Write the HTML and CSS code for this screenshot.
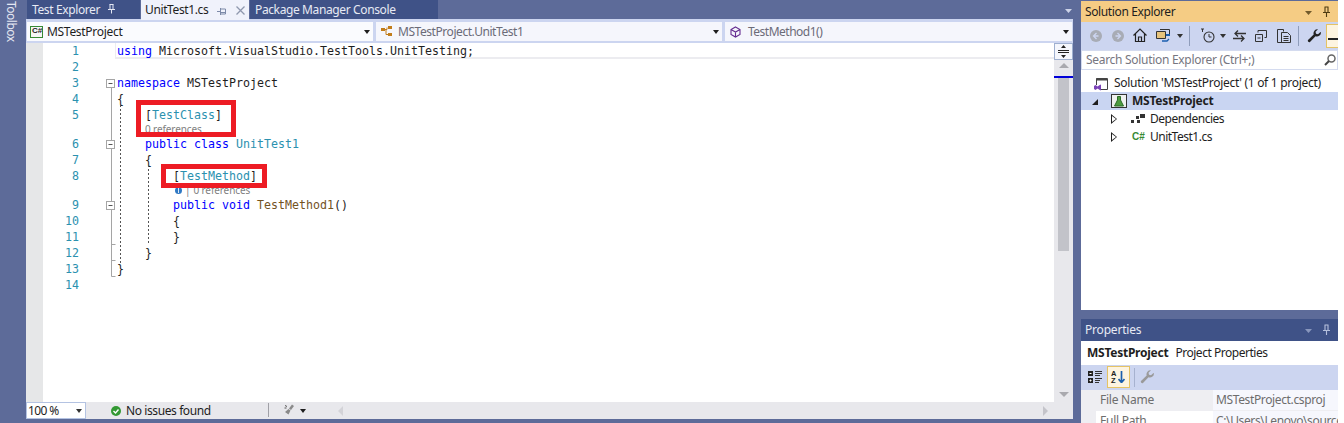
FILE: index.html
```html
<!DOCTYPE html>
<html lang="en">
<head>
<meta charset="utf-8">
<title>Visual Studio - UnitTest1.cs</title>
<link rel="stylesheet" href="styles.css">
</head>
<body>
<div class="ide">
  <aside class="rail"><span class="rail-label">Toolbox</span></aside>

  <main class="doc">
    <div class="tabs">
      <div class="tab tab-a">Test Explorer
        <svg class="tab-pin" width="9" height="11" viewBox="0 0 9 11"><path d="M2.500 1.500h4M3 1.500v4.500M6 1.500v4.500M1 6.500h7M4.500 6.500v4" fill="none" stroke="#e4e8f4"/></svg>
      </div>
      <div class="tab tab-b">UnitTest1.cs
        <svg class="tab-pin2" width="11" height="9" viewBox="0 0 11 9"><path d="M0 4.500h3.500M3.500 1v7M3.500 2h5v5h-5M3.500 5.500h5" fill="none" stroke="#7d8aa8"/></svg>
        <svg class="tab-x" width="9" height="9" viewBox="0 0 9 9"><path d="M.5.5l8 8M8.500.5l-8 8" stroke="#8f98ae" stroke-width="1.300"/></svg>
      </div>
      <div class="tab tab-c">Package Manager Console</div>
      <svg class="tab-menu" width="7" height="4" viewBox="0 0 7 4"><path d="M0 0h7L3.500 4z" fill="#ced4e8"/></svg>
    </div>

    <div class="nav">
      <div class="drop drop-1">
        <svg class="cs-badge" width="13" height="12" viewBox="0 0 13 12"><rect x=".5" y=".5" width="12" height="11" fill="#f6f6f6" stroke="#388a34"/></svg>
        <span class="cs-text">C#</span>
        <span class="drop-text">MSTestProject</span>
        <i class="caret"></i>
      </div>
      <div class="drop">
        <svg class="drop-ico" width="14" height="13" viewBox="0 0 14 13"><path d="M1 3h4v3H1zM8 1h4v3H8zM8 8h4v3H8z" fill="#c27d1a"/><path d="M4 4.500h3V2.500M6 4.500V9.500h2" fill="none" stroke="#c27d1a"/></svg>
        <span class="drop-text muted">MSTestProject.UnitTest1</span>
        <i class="caret"></i>
      </div>
      <div class="drop drop-3">
        <svg class="drop-ico" width="11" height="12" viewBox="0 0 11 12"><path d="M5.500 1L10 3.500v5L5.500 11 1 8.500v-5zM1 3.500l4.500 2.500 4.500-2.500M5.500 6v5" fill="none" stroke="#652d90" stroke-width="1.100"/></svg>
        <span class="drop-text muted method-name">TestMethod1()</span>
        <i class="caret"></i>
      </div>
    </div>

    <div class="editor">
      <div class="gutter"></div>
      <div class="code">
        <div class="ln current"><b>1</b><pre><s>using</s> Microsoft.VisualStudio.TestTools.UnitTesting;</pre></div>
        <div class="ln"><b>2</b><pre></pre></div>
        <div class="ln"><b>3</b><pre><s>namespace</s> MSTestProject</pre></div>
        <div class="ln"><b>4</b><pre>{</pre></div>
        <div class="ln"><b>5</b><pre>    [<u>TestClass</u>]</pre></div>
        <div class="lens lens-1">0 references</div>
        <div class="ln"><b>6</b><pre>    <s>public</s> <s>class</s> <u>UnitTest1</u></pre></div>
        <div class="ln"><b>7</b><pre>    {</pre></div>
        <div class="ln"><b>8</b><pre>        [<u>TestMethod</u>]</pre></div>
        <div class="lens lens-2"><svg class="info" width="7" height="7" viewBox="0 0 7 7"><circle cx="3.500" cy="3.500" r="3.500" fill="#2f79c4"/><rect x="3" y="1" width="1" height="5" fill="#dbe8f6"/></svg><span class="bar">|</span>0 references</div>
        <div class="ln"><b>9</b><pre>        <s>public</s> <s>void</s> <em>TestMethod1</em>()</pre></div>
        <div class="ln"><b>10</b><pre>        {</pre></div>
        <div class="ln"><b>11</b><pre>        }</pre></div>
        <div class="ln"><b>12</b><pre>    }</pre></div>
        <div class="ln"><b>13</b><pre>}</pre></div>
        <div class="ln"><b>14</b><pre></pre></div>
      </div>

      <svg class="folds" width="180" height="359" viewBox="0 0 180 359">
        <g fill="none" stroke="#a5a5a5">
          <path d="M68.500 45v188.500h4M68.500 201.500h4M68.500 217.500h4"/>
          <rect x="63.500" y="36.500" width="8" height="8" fill="#fff"/>
          <rect x="63.500" y="97.500" width="8" height="8" fill="#fff"/>
          <rect x="63.500" y="158.500" width="8" height="8" fill="#fff"/>
        </g>
        <path d="M65.500 40.500h4M65.500 101.500h4M65.500 162.500h4" stroke="#555"/>
        <path d="M77.500 62v160M105.500 122v78" stroke="#555" stroke-dasharray="2 2" fill="none"/>
      </svg>

      <div class="mark mark-1"></div>
      <div class="mark mark-2"></div>

      <div class="vscroll">
        <div class="split"><svg width="11" height="13" viewBox="0 0 11 13"><path d="M0 5.500h11M0 7.500h11" stroke="#222"/><path d="M5.500 0L3 3h5zM5.500 13L3 10h5z" fill="#222"/></svg></div>
        <i class="sc-up"></i>
        <div class="sc-line"></div>
        <div class="thumb"></div>
        <i class="sc-down"></i>
      </div>
    </div>

    <div class="status">
      <div class="zoom-box">100 %<i class="caret"></i></div>
      <svg class="ok" width="10" height="10" viewBox="0 0 10 10"><circle cx="5" cy="5" r="5" fill="#339933"/><path d="M2.500 5l2 2 3-3.500" fill="none" stroke="#fff" stroke-width="1.400"/></svg>
      <span class="issues">No issues found</span>
      <i class="st-sep"></i>
      <svg class="broom" width="11" height="11" viewBox="0 0 11 11"><path d="M8 .5L10 2 7 6 5 4.500zM4.500 5L6.500 6.500 4.500 10.500 1 8z" fill="#8a8a8a"/><path d="M1 1.500l2 1M.5 4l2 0" stroke="#555"/></svg>
      <i class="caret caret-dark"></i>
      <i class="hs-left"></i>
      <i class="hs-right"></i>
    </div>
  </main>

  <section class="side">
    <div class="se">
      <header class="title title-on">
        <span>Solution Explorer</span>
        <svg class="title-arrow" width="7" height="4" viewBox="0 0 7 4"><path d="M0 0h7L3.500 4z" fill="#715a2b"/></svg>
        <svg class="title-pin" width="9" height="11" viewBox="0 0 9 11"><path d="M2.500 1h4M3 1v5M6 1v5M1 6.500h7M4.500 6.500v4.500" fill="none" stroke="#4e3a10" stroke-width="1.100"/></svg>
      </header>
      <div class="se-tools">
        <svg class="tool t-back" width="12" height="12" viewBox="0 0 12 12"><circle cx="6" cy="6" r="6" fill="#a8acb5"/><path d="M6.500 3L3.500 6l3 3M3.500 6h5" fill="none" stroke="#ccd5f0" stroke-width="1.300"/></svg>
        <svg class="tool t-fwd" width="12" height="12" viewBox="0 0 12 12"><circle cx="6" cy="6" r="6" fill="#a8acb5"/><path d="M5.500 3l3 3-3 3M8.500 6h-5" fill="none" stroke="#ccd5f0" stroke-width="1.300"/></svg>
        <svg class="tool t-home" width="14" height="14" viewBox="0 0 14 14"><path d="M.5 7.500L7 1l6.500 6.500M2.500 6v7.500h9V6M5.500 13.500V9h3v4.500" fill="none" stroke="#222" stroke-width="1.200"/></svg>
        <svg class="tool t-sync" width="15" height="14" viewBox="0 0 15 14"><path d="M.5 3.500h9v7h-9z" fill="#e6c37c" stroke="#333"/><path d="M4 1.500h9.500v6" fill="none" stroke="#333"/><path d="M6 13h5l2-2" fill="none" stroke="#1b5fae" stroke-width="1.300"/><path d="M10 6h4v2h-4z" fill="#1b5fae"/></svg>
        <i class="tcaret t-c1"></i>
        <i class="tsep t-s1"></i>
        <svg class="tool t-clock" width="14" height="15" viewBox="0 0 14 15"><circle cx="8" cy="9" r="5" fill="none" stroke="#333" stroke-width="1.100"/><path d="M8 6v3h2.500M0 1h3M1.500 1v3" fill="none" stroke="#333"/></svg>
        <i class="tcaret t-c2"></i>
        <svg class="tool t-swap" width="13" height="12" viewBox="0 0 13 12"><path d="M13 3.500H2M5 .5l-3 3 3 3M0 8.500h11M8 5.500l3 3-3 3" fill="none" stroke="#333" stroke-width="1.300"/></svg>
        <svg class="tool t-coll" width="12" height="12" viewBox="0 0 12 12"><path d="M.5 4.500h7v7h-7zM3 2.500V.5h8.500v7H9.500M2.500 8h3" fill="none" stroke="#333"/></svg>
        <svg class="tool t-copy" width="14" height="14" viewBox="0 0 14 14"><path d="M8.500 13.500h-8V.5h6v2M4.500 3.500h6l3 3v7h-9z" fill="#ccd5f0" stroke="#333"/><path d="M6.500 7.500h5M6.500 9.500h5M6.500 11.500h5" stroke="#333"/></svg>
        <i class="tsep t-s2"></i>
        <svg class="tool t-wrench" width="14" height="14" viewBox="0 0 14 14"><path d="M14 3.500a4 4 0 0 1-5.500 3.700L3 13a1.500 1.500 0 0 1-2-2l5.700-5.500A4 4 0 0 1 11 .3L8.500 2.800l.5 2 2 .5L13.500 3z" fill="#222"/></svg>
        <div class="t-pin"><i></i></div>
      </div>
      <div class="se-search">
        <span>Search Solution Explorer (Ctrl+;)</span>
        <svg width="12" height="12" viewBox="0 0 12 12"><circle cx="7.500" cy="4.500" r="3.500" fill="none" stroke="#666" stroke-width="1.500"/><path d="M5 7l-4 4" stroke="#444" stroke-width="2"/></svg>
      </div>
      <div class="tree">
        <div class="node n-sol">
          <svg class="n-ico" width="14" height="14" viewBox="0 0 14 14"><path d="M2.500 8V1.500h11v11H7" fill="none" stroke="#444"/><path d="M2 1.500h11V3.500H2z" fill="#444"/><path d="M0 9l1.500-1 2 1.500L6.500 7.500 7 8v5l-.5.500-3-2-2 1.500L0 12z" fill="#7b43b8"/></svg>
          <span>Solution 'MSTestProject' (1 of 1 project)</span>
        </div>
        <div class="node n-proj">
          <i class="open"></i>
          <svg class="n-ico" width="16" height="14" viewBox="0 0 16 14"><rect x=".5" y=".5" width="15" height="13" fill="#eef0ee" stroke="#333"/><path d="M6.500 2.500h3v3.500l3 6H3.500l3-6z" fill="#4d9b3f" stroke="#2a6b26"/></svg>
          <strong>MSTestProject</strong>
        </div>
        <div class="node n-dep">
          <i class="closed"></i>
          <svg class="n-ico" width="14" height="10" viewBox="0 0 14 10"><path d="M9 0h5v4H9zM5 2h3v3H5zM0 6h3v3H0zM6 6h3v3H6z" fill="#333"/></svg>
          <span>Dependencies</span>
        </div>
        <div class="node n-dep">
          <i class="closed"></i>
          <span class="cs-green">C#</span>
          <span>UnitTest1.cs</span>
        </div>
      </div>
    </div>

    <div class="props">
      <header class="title title-off">
        <span>Properties</span>
        <svg class="title-arrow" width="7" height="4" viewBox="0 0 7 4"><path d="M0 0h7L3.500 4z" fill="#8997bd"/></svg>
        <svg class="title-pin" width="9" height="11" viewBox="0 0 9 11"><path d="M2.500 1h4M3 1v5M6 1v5M1 6.500h7M4.500 6.500v4.500" fill="none" stroke="#b6c0dc" stroke-width="1.100"/></svg>
      </header>
      <div class="p-head"><strong>MSTestProject</strong><span>Project Properties</span></div>
      <div class="p-tools">
        <svg class="p-cat" width="14" height="14" viewBox="0 0 14 14"><path d="M0 1h5v5H0zM0 8h5v5H0z" fill="#222"/><path d="M1.500 3.500h2M1.500 10.500h2M2.500 9.500v2" stroke="#fff"/><path d="M7 1.500h7M7 3.500h7M7 5.500h5M7 8.500h7M7 10.500h5M7 12.500h4" stroke="#333"/></svg>
        <div class="p-az"><span class="az">A<br>Z</span><svg width="7" height="12" viewBox="0 0 7 12"><path d="M3.500 0v11M.5 8l3 3.500L6.500 8" fill="none" stroke="#1b5fae" stroke-width="1.700"/></svg></div>
        <i class="p-sep"></i>
        <svg class="p-wrench" width="14" height="14" viewBox="0 0 14 14"><path d="M14 3.500a4 4 0 0 1-5.500 3.700L3 13a1.500 1.500 0 0 1-2-2l5.700-5.500A4 4 0 0 1 11 .3L8.500 2.800l.5 2 2 .5L13.500 3z" fill="#9a9a9a"/></svg>
      </div>
      <div class="p-grid">
        <div class="p-row p-first"><span class="p-key">File Name</span><span class="p-val">MSTestProject.csproj</span></div>
        <div class="p-row"><span class="p-key">Full Path</span><span class="p-val">C:\Users\Lenovo\source\repos\MSTestProject</span></div>
      </div>
    </div>
  </section>
</div>
</body>
</html>
```

FILE: styles.css
```css
* { box-sizing: border-box; }
html, body { margin: 0; padding: 0; background: #fff; }
body { width: 1344px; height: 423px; overflow: hidden; font: 12px/16px "Noto Sans", sans-serif; letter-spacing: -.38px; color: #1e1e1e; }
i { display: block; }

.ide { display: flex; width: 1338px; height: 423px; background: #5d6b99; overflow: hidden; }

.rail { width: 26px; flex: none; padding-top: 1px; padding-left: 3px; }
.rail-label { display: block; writing-mode: vertical-rl; color: #e4e7f2; line-height: 16px; letter-spacing: -.5px; }

.doc { width: 1047px; flex: none; display: flex; flex-direction: column; height: 419px; margin-right: 8px; }

.tabs { position: relative; height: 19px; flex: none; display: flex; gap: 1px; padding-left: 1px; }
.tab { position: relative; height: 19px; line-height: 19px; padding-left: 5px; color: #e7eaf4; background: #3f5287; }
.tab-a { width: 113px; }
.tab-b { width: 108px; padding-left: 4px; height: 20px; color: #1e1e1e; background: #f0f2fb; }
.tab-c { width: 188px; }
.tab-pin { position: absolute; left: 80px; top: 3px; }
.tab-pin2 { position: absolute; left: 76px; top: 7px; }
.tab-x { position: absolute; left: 95px; top: 6px; }
.tab-menu { position: absolute; left: 1039px; top: 9px; }

.nav { height: 24px; flex: none; display: flex; gap: 3px; background: #ccd5f0; padding: 3px 1px 2px 1px; }
.drop { position: relative; flex: 1; display: flex; align-items: center; background: #f5f6fc; height: 19px; padding-left: 3px; }
.drop-1 { background: #fafbfe; letter-spacing: -.3px; }
.drop-3 { padding-left: 4px; }
.drop-text { margin-left: 4px; }
.muted { color: #6b6b78; letter-spacing: -.44px; }
.method-name { margin-left: 7px; letter-spacing: -.5px; }
.cs-badge { flex: none; }
.cs-text { position: absolute; left: 5px; top: 1px; font: bold 8px/16px "Liberation Sans", sans-serif; letter-spacing: 0; color: #222; }
.drop-ico { flex: none; margin-left: 1px; }
.caret { position: absolute; right: 3px; top: 8px; width: 0; height: 0; border: 3.500px solid transparent; border-top: 4px solid #1e1e1e; border-bottom: 0; }

.editor { position: relative; flex: 1; display: flex; background: #fff; min-height: 0; }
.gutter { width: 17px; flex: none; background: #e6e7e8; }
.code { flex: 1; font: 11.63px/16px "DejaVu Sans Mono", monospace; letter-spacing: 0; padding-right: 19px; }
.ln { display: flex; height: 16px; }
.ln b { width: 36px; flex: none; text-align: right; font-weight: 400; color: #2b91af; }
.ln pre { margin: 0 0 0 38px; font: inherit; white-space: pre; }
.current pre { flex: 1; margin-left: 36px; padding-left: 1px; height: 16px; border-bottom: 2px solid #ececf0; border-left: 1px solid #ececf0; line-height: 16px; }
s { text-decoration: none; color: #0000ff; }
u { text-decoration: none; color: #2b91af; }
em { font-style: normal; color: #74531f; }
.lens { height: 13px; font: 10px/13px "Noto Sans", sans-serif; letter-spacing: -.1px; color: #7f7f7f; display: flex; align-items: center; }
.lens-1 { padding-left: 102px; }
.lens-2 { padding-left: 132px; }
.info { margin-right: 3px; }
.bar { white-space: pre; margin-right: 3px; }

.folds { position: absolute; left: 17px; top: 0; pointer-events: none; }
.mark { position: absolute; border: 5px solid #ed1c24; }
.mark-1 { left: 110px; top: 57px; width: 100px; height: 37px; }
.mark-2 { left: 135px; top: 121px; width: 106px; height: 24px; }

.vscroll { position: absolute; right: 0; top: 0; bottom: 0; width: 19px; background: #e8e8ec; }
.split { height: 17px; background: #f4f6fc; border: 1px solid #9fb0d0; display: flex; align-items: center; justify-content: center; }
.sc-up { position: absolute; left: 5px; top: 20px; width: 0; height: 0; border: 5px solid transparent; border-top: 0; border-bottom: 5px solid #a9a9ae; }
.sc-line { position: absolute; left: 0; right: 0; top: 33px; height: 2px; background: #0000d8; }
.thumb { position: absolute; left: 4px; width: 11px; top: 35px; height: 173px; background: #c2c3c9; }
.sc-down { position: absolute; left: 5px; bottom: 5px; width: 0; height: 0; border: 5px solid transparent; border-bottom: 0; border-top: 5px solid #a9a9ae; }

.status { position: relative; height: 17px; flex: none; background: #e8e8ec; }
.zoom-box { position: absolute; left: 0; top: 0; width: 60px; height: 17px; background: #fff; border: 1px solid #b4c3e2; padding-left: 1px; line-height: 15px; letter-spacing: -.6px; }
.zoom-box .caret { top: 6px; border-top-color: #333; }
.ok { position: absolute; left: 85px; top: 4px; }
.issues { position: absolute; left: 100px; top: 0; line-height: 17px; letter-spacing: -.4px; }
.st-sep { position: absolute; left: 242px; top: 1px; width: 1px; height: 14px; background: #a0a0a6; }
.broom { position: absolute; left: 258px; top: 2px; }
.caret-dark { left: 274px; right: auto; top: 7px; }
.hs-left { position: absolute; left: 312px; top: 4px; width: 0; height: 0; border: 5px solid transparent; border-left: 0; border-right: 5px solid #d3d3d8; }
.hs-right { position: absolute; left: 1017px; top: 4px; width: 0; height: 0; border: 5px solid transparent; border-right: 0; border-left: 5px solid #c4c4ca; }

.side { width: 257px; flex: none; display: flex; flex-direction: column; gap: 9px; }
.se { height: 310px; flex: none; display: flex; flex-direction: column; background: #fff; }
.title { position: relative; flex: none; height: 22px; line-height: 21px; padding-left: 4px; }
.title-on { background: #f5cc84; color: #1e1e1e; border-top: 1px solid #5d6b99; }
.title-off { background: #3f5287; color: #e7eaf4; letter-spacing: -.2px; }
.title-arrow { position: absolute; left: 224px; top: 10px; }
.title-pin { position: absolute; left: 241px; top: 5px; }

.se-tools { position: relative; height: 28px; flex: none; background: #ccd5f0; }
.tool { position: absolute; }
.t-back { left: 9px; top: 8px; }
.t-fwd { left: 31px; top: 8px; }
.t-home { left: 52px; top: 6px; }
.t-sync { left: 75px; top: 6px; }
.tcaret { position: absolute; top: 12px; width: 0; height: 0; border: 3px solid transparent; border-top: 4px solid #333; border-bottom: 0; }
.t-c1 { left: 96px; }
.t-c2 { left: 139px; }
.tsep { position: absolute; top: 4px; width: 1px; height: 20px; background: #8f9dbb; }
.t-s1 { left: 108px; }
.t-s2 { left: 217px; }
.t-clock { left: 120px; top: 6px; }
.t-swap { left: 152px; top: 8px; }
.t-coll { left: 174px; top: 8px; }
.t-copy { left: 196px; top: 7px; }
.t-wrench { left: 226px; top: 7px; }
.t-pin { position: absolute; left: 245px; top: 2px; width: 12px; height: 24px; background: #fdf4e0; border: 1px solid #e5c365; border-right: 0; }
.t-pin i { position: absolute; left: 1px; top: 13px; width: 10px; height: 2px; background: #222; }

.se-search { height: 20px; flex: none; background: #fff; border: 1px solid #d4dbef; display: flex; align-items: center; justify-content: space-between; padding: 0 1px 0 4px; color: #767680; letter-spacing: -.3px; }
.tree { flex: 1; padding-top: 4px; }
.node { display: flex; align-items: center; height: 18px; position: relative; }
.n-sol { padding-left: 13px; letter-spacing: -.29px; }
.n-sol .n-ico { margin-right: 6px; margin-top: 1px; }
.n-proj { background: #c9d5f2; padding-left: 37px; }
.n-proj .n-ico { margin-left: 24px; position: absolute; left: 6px; top: 2px; }
.n-proj strong { font-weight: 700; margin-left: 14px; letter-spacing: -.25px; }
.open { position: absolute; left: 11px; top: 7px; width: 0; height: 0; border-bottom: 6px solid #1e1e1e; border-left: 6px solid transparent; }
.closed { position: absolute; left: 30px; top: 4px; width: 0; height: 0; border: 5px solid transparent; border-right: 0; border-left: 6px solid #1e1e1e; }
.closed::after { content: ""; position: absolute; left: -5px; top: -3px; width: 0; height: 0; border: 3px solid transparent; border-right: 0; border-left: 4px solid #fff; }
.n-dep { padding-left: 69px; letter-spacing: -.5px; }
.n-dep .n-ico { position: absolute; left: 50px; top: 4px; }
.cs-green { position: absolute; left: 51px; top: 0; font: bold 10px/18px "Liberation Sans", sans-serif; letter-spacing: 0; color: #388a34; }

.props { flex: 1; min-height: 0; display: flex; flex-direction: column; background: #fff; overflow: hidden; }
.p-head { height: 24px; flex: none; display: flex; align-items: center; gap: 7px; padding-left: 6px; letter-spacing: -.47px; }
.p-head strong { font-weight: 700; letter-spacing: -.25px; }
.p-tools { position: relative; height: 25px; flex: none; background: #ccd5f0; }
.p-cat { position: absolute; left: 7px; top: 5px; }
.p-az { position: absolute; left: 26px; top: 1px; width: 23px; height: 22px; background: #fdf4e0; border: 1px solid #e5c365; display: flex; align-items: center; padding-left: 3px; }
.az { font: bold 7.500px/7.500px "Liberation Sans", sans-serif; letter-spacing: 0; color: #222; }
.p-az svg { margin-left: 2px; }
.p-sep { position: absolute; left: 53px; top: 3px; width: 1px; height: 19px; background: #a7b2cf; }
.p-wrench { position: absolute; left: 59px; top: 5px; }
.p-grid { flex: 1; background: #eeeef2; padding-left: 15px; }
.p-row { display: flex; height: 21px; line-height: 20px; color: #6d6d6d; border-bottom: 1px solid #eeeef2; }
.p-key { width: 117px; flex: none; padding-left: 4px; background: #fff; letter-spacing: -.25px; }
.p-first .p-key { background: #eeeef2; }
.p-val { flex: 1; padding-left: 3px; background: #f6f7fd; white-space: nowrap; overflow: hidden; letter-spacing: -.37px; }
```
